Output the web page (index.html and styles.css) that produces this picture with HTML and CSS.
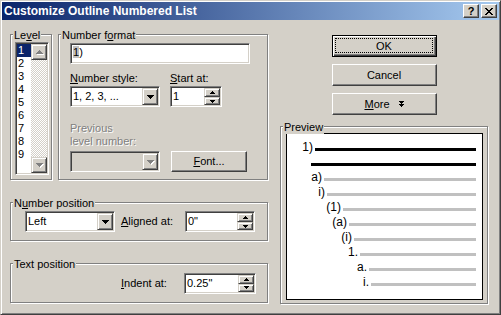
FILE: index.html
```html
<!DOCTYPE html>
<html>
<head>
<meta charset="utf-8">
<title>Customize Outline Numbered List</title>
<link rel="stylesheet" href="styles.css">
</head>
<body>
<div class="window">
  <div class="titlebar">
    <span class="title">Customize Outline Numbered List</span>
    <div class="caps">
      <span class="cap help">?</span>
      <span class="cap close"><svg width="8" height="7" viewBox="0 0 8 7"><path d="M0 0h2v1H0zM6 0h2v1H6zM1 1h2v1H1zM5 1h2v1H5zM2 2h4v1H2zM3 3h2v1H3zM2 4h4v1H2zM1 5h2v1H1zM5 5h2v1H5zM0 6h2v1H0zM6 6h2v1H6z"/></svg></span>
    </div>
  </div>

  <div class="client">
    <div class="leftcol">
      <div class="toprow">
        <div class="group level">
          <span class="glabel">Le<u>v</u>el</span>
          <div class="field listbox">
            <div class="items">
              <div class="item sel">1</div>
              <div class="item">2</div>
              <div class="item">3</div>
              <div class="item">4</div>
              <div class="item">5</div>
              <div class="item">6</div>
              <div class="item">7</div>
              <div class="item">8</div>
              <div class="item">9</div>
            </div>
            <div class="sb">
              <div class="sbtn"><svg class="dis" width="7" height="4" viewBox="0 0 7 4"><path d="M3 0h1v1H3zM2 1h3v1H2zM1 2h5v1H1zM0 3h7v1H0z"/></svg></div>
              <div class="sbtn"><svg class="dis" width="7" height="4" viewBox="0 0 7 4"><path d="M0 0h7v1H0zM1 1h5v1H1zM2 2h3v1H2zM3 3h1v1H3z"/></svg></div>
            </div>
          </div>
        </div>

        <div class="group numfmt">
          <span class="glabel">Number f<u>o</u>rmat</span>
          <div class="field textbox"><span class="shade">1</span>)</div>
          <div class="fieldrow">
            <div class="fieldcol">
              <span class="lbl"><u>N</u>umber style:</span>
              <div class="field combo w90">
                <span class="val">1, 2, 3, ...</span>
                <span class="ddbtn"><svg width="7" height="4" viewBox="0 0 7 4"><path d="M0 0h7v1H0zM1 1h5v1H1zM2 2h3v1H2zM3 3h1v1H3z"/></svg></span>
              </div>
            </div>
            <div class="fieldcol">
              <span class="lbl"><u>S</u>tart at:</span>
              <div class="field spin w52">
                <span class="val">1</span>
                <span class="arrows">
                  <span class="ab"><svg width="5" height="3" viewBox="0 0 5 3"><path d="M2 0h1v1H2zM1 1h3v1H1zM0 2h5v1H0z"/></svg></span>
                  <span class="ab"><svg width="5" height="3" viewBox="0 0 5 3"><path d="M0 0h5v1H0zM1 1h3v1H1zM2 2h1v1H2z"/></svg></span>
                </span>
              </div>
            </div>
          </div>
          <div class="fieldrow prevrow">
            <div class="fieldcol">
              <span class="lbl disabled">Previous<br>level number:</span>
              <div class="field combo w90 off">
                <span class="val"></span>
                <span class="ddbtn"><svg class="dis" width="7" height="4" viewBox="0 0 7 4"><path d="M0 0h7v1H0zM1 1h5v1H1zM2 2h3v1H2zM3 3h1v1H3z"/></svg></span>
              </div>
            </div>
            <span class="btn fontbtn"><span><u>F</u>ont...</span></span>
          </div>
        </div>
      </div>

      <div class="group numpos">
        <span class="glabel">N<u>u</u>mber position</span>
        <div class="field combo w90">
          <span class="val">Left</span>
          <span class="ddbtn"><svg width="7" height="4" viewBox="0 0 7 4"><path d="M0 0h7v1H0zM1 1h5v1H1zM2 2h3v1H2zM3 3h1v1H3z"/></svg></span>
        </div>
        <span class="rlbl alig"><u>A</u>ligned at:</span>
        <div class="field spin w70">
          <span class="val">0"</span>
          <span class="arrows">
            <span class="ab"><svg width="5" height="3" viewBox="0 0 5 3"><path d="M2 0h1v1H2zM1 1h3v1H1zM0 2h5v1H0z"/></svg></span>
            <span class="ab"><svg width="5" height="3" viewBox="0 0 5 3"><path d="M0 0h5v1H0zM1 1h3v1H1zM2 2h1v1H2z"/></svg></span>
          </span>
        </div>
      </div>

      <div class="group textpos">
        <span class="glabel">Text position</span>
        <span class="rlbl ind"><u>I</u>ndent at:</span>
        <div class="field spin w72">
          <span class="val">0.25"</span>
          <span class="arrows">
            <span class="ab"><svg width="5" height="3" viewBox="0 0 5 3"><path d="M2 0h1v1H2zM1 1h3v1H1zM0 2h5v1H0z"/></svg></span>
            <span class="ab"><svg width="5" height="3" viewBox="0 0 5 3"><path d="M0 0h5v1H0zM1 1h3v1H1zM2 2h1v1H2z"/></svg></span>
          </span>
        </div>
      </div>
    </div>

    <div class="rightcol">
      <div class="btnstack">
        <span class="btn default"><span>OK</span></span>
        <span class="btn"><span>Cancel</span></span>
        <span class="btn"><span><u>M</u>ore</span><svg class="more" width="5" height="6" viewBox="0 0 5 6"><path d="M0 0h5v1H0zM1 1h3v1H1zM2 2h1v1H2zM0 3h5v1H0zM1 4h3v1H1zM2 5h1v1H2z"/></svg></span>
      </div>
      <div class="group preview">
        <span class="glabel">Preview</span>
        <div class="pbox">
          <div class="prow"><span class="pnum l1">1)</span><span class="pbar black"></span></div>
          <div class="prow"><span class="pnum l2"></span><span class="pbar black"></span></div>
          <div class="prow"><span class="pnum l3">a)</span><span class="pbar"></span></div>
          <div class="prow"><span class="pnum l4">i)</span><span class="pbar"></span></div>
          <div class="prow"><span class="pnum l5">(1)</span><span class="pbar"></span></div>
          <div class="prow"><span class="pnum l6">(a)</span><span class="pbar"></span></div>
          <div class="prow"><span class="pnum l7">(i)</span><span class="pbar"></span></div>
          <div class="prow"><span class="pnum l8">1.</span><span class="pbar"></span></div>
          <div class="prow"><span class="pnum l9">a.</span><span class="pbar"></span></div>
          <div class="prow"><span class="pnum l10">i.</span><span class="pbar"></span></div>
        </div>
      </div>
    </div>
  </div>
</div>
</body>
</html>
```

FILE: styles.css
```css
* { box-sizing: border-box; }

body {
  margin: 0;
  font-family: "Liberation Sans", Arial, sans-serif;
  font-size: 11px;
  color: #000;
  background: #d4d0c8;
}

u { text-decoration: underline; text-underline-offset: 1px; }

.window {
  width: 501px;
  height: 315px;
  background: #d4d0c8;
  border: 1px solid;
  border-color: #d4d0c8 #404040 #404040 #d4d0c8;
  box-shadow: inset 1px 1px #fff, inset -1px -1px #808080;
  padding: 1px;
  display: flex;
  flex-direction: column;
}

/* Title bar */
.titlebar {
  height: 18px;
  flex: none;
  background: linear-gradient(to right, #0a246a, #a6caf0);
  display: flex;
  align-items: center;
  justify-content: space-between;
  padding: 0 2px 0 2px;
}
.title {
  color: #fff;
  font-weight: bold;
  font-size: 12px;
  line-height: 18px;
  white-space: nowrap;
}
.caps { display: flex; gap: 2px; }
.cap {
  width: 16px;
  height: 14px;
  background: #d4d0c8;
  border: 1px solid;
  border-color: #fff #404040 #404040 #fff;
  box-shadow: inset -1px -1px #808080;
  display: flex;
  align-items: center;
  justify-content: center;
  font-weight: bold;
  font-size: 11px;
  line-height: 12px;
}
.cap.close svg { display: block; }

/* Client area */
.client {
  flex: 1;
  display: flex;
  gap: 12px;
  padding: 14px 0 0 8px;
}
.leftcol {
  width: 258px;
  display: flex;
  flex-direction: column;
}
.toprow {
  display: flex;
  gap: 6px;
  height: 146px;
  flex: none;
}

/* Group boxes */
.group {
  position: relative;
  border: 1px solid #808080;
  box-shadow: inset 1px 1px #fff, 1px 1px #fff;
}
.glabel {
  position: absolute;
  top: -6px;
  left: 2px;
  padding: 0 1px;
  background: #d4d0c8;
  line-height: 13px;
  white-space: nowrap;
}

/* Sunken field */
.field {
  background: #fff;
  border: 1px solid;
  border-color: #808080 #fff #fff #808080;
  box-shadow: inset 1px 1px #404040, inset -1px -1px #d4d0c8;
  padding: 1px;
}

/* Level */
.level {
  width: 42px;
  padding: 7px 0 0 4px;
}
.listbox {
  width: 34px;
  height: 133px;
  display: flex;
}
.items { flex: 1; }
.item {
  height: 13px;
  line-height: 13px;
  padding-left: 1px;
}
.item.sel { background: #0a246a; color: #fff; }
.sb {
  width: 16px;
  display: flex;
  flex-direction: column;
  justify-content: space-between;
  background: repeating-conic-gradient(#fff 0 25%, #d4d0c8 0 50%) 0 0 / 2px 2px;
}
.sbtn, .ddbtn, .ab {
  background: #d4d0c8;
  border: 1px solid;
  border-color: #d4d0c8 #404040 #404040 #d4d0c8;
  box-shadow: inset 1px 1px #fff, inset -1px -1px #808080;
  display: flex;
  align-items: center;
  justify-content: center;
}
.sbtn { height: 16px; }
svg { display: block; fill: #000; }
svg.dis { fill: #808080; filter: drop-shadow(1px 1px 0 #fff); }

/* Number format */
.numfmt {
  width: 210px;
  padding: 8px 0 0 11px;
}
.textbox {
  width: 180px;
  height: 21px;
  padding: 1px 2px;
  line-height: 14px;
}
.shade { background: #c0c0c0; }
.fieldrow {
  display: flex;
  gap: 10px;
  margin-top: 8px;
}
.fieldcol {
  display: flex;
  flex-direction: column;
}
.lbl {
  line-height: 13px;
  margin-bottom: 1px;
  white-space: nowrap;
}
.lbl.disabled {
  color: #808080;
  text-shadow: 1px 1px 0 #fff;
  margin-bottom: 3px;
}
.prevrow {
  margin-top: 15px;
  gap: 11px;
  align-items: flex-end;
}
.combo, .spin {
  height: 21px;
  display: flex;
}
.combo .val, .spin .val {
  flex: 1;
  line-height: 17px;
  padding-left: 1px;
  white-space: nowrap;
}
.combo.off { background: #d4d0c8; }
.ddbtn { width: 16px; }
.arrows {
  width: 16px;
  display: flex;
  flex-direction: column;
}
.ab { height: 9px; }
.ab + .ab { height: 8px; }
.w90 { width: 90px; }
.w52 { width: 52px; }
.w70 { width: 70px; }
.w72 { width: 72px; }

/* Push buttons */
.btn {
  position: relative;
  height: 21px;
  background: #d4d0c8;
  border: 1px solid;
  border-color: #fff #404040 #404040 #fff;
  box-shadow: inset -1px -1px #808080;
  display: flex;
  align-items: center;
  justify-content: center;
  line-height: 13px;
}
.fontbtn { width: 76px; }

/* Number position / text position */
.numpos {
  margin-top: 22px;
  height: 39px;
  display: flex;
  align-items: center;
  padding-left: 14px;
}
.rlbl { white-space: nowrap; line-height: 13px; }
.alig { width: 64px; margin-left: 6px; }
.textpos {
  margin-top: 22px;
  height: 40px;
  display: flex;
  align-items: center;
  padding-left: 110px;
}
.ind { width: 63px; }

/* Right column */
.rightcol {
  width: 208px;
  padding-top: 1px;
  display: flex;
  flex-direction: column;
}
.btnstack {
  display: flex;
  flex-direction: column;
  align-items: center;
  gap: 7px;
}
.btnstack .btn { width: 105px; height: 22px; }
.btn.default {
  border: 1px solid #000;
  box-shadow: inset 1px 1px #fff, inset -1px -1px #404040, inset -2px -2px #808080;
}
.btn.default::after {
  content: "";
  position: absolute;
  inset: 2px 3px 3px 2px;
  border: 1px dotted #000;
}
.more { margin-left: 9px; }

.preview {
  margin-top: 11px;
  height: 178px;
  padding: 6px 0 0 5px;
}
.pbox {
  width: 197px;
  height: 167px;
  border: 1px solid #000;
  background: #fff;
  padding-top: 6px;
}
.prow {
  display: flex;
  height: 15px;
}
.pnum {
  flex: none;
  text-align: right;
  padding-right: 2px;
  font-size: 12px;
  line-height: 15px;
  white-space: nowrap;
}
.pbar {
  flex: 1;
  height: 3px;
  margin-top: 8px;
  margin-right: 6px;
  background: #c0c0c0;
}
.pbar.black { background: #000; }
.l1 { width: 28px; }
.l2 { width: 24px; }
.l3 { width: 37px; }
.l4 { width: 40px; }
.l5 { width: 56px; }
.l6 { width: 62px; }
.l7 { width: 67px; }
.l8 { width: 73px; }
.l9 { width: 82px; }
.l10 { width: 84px; }
```
